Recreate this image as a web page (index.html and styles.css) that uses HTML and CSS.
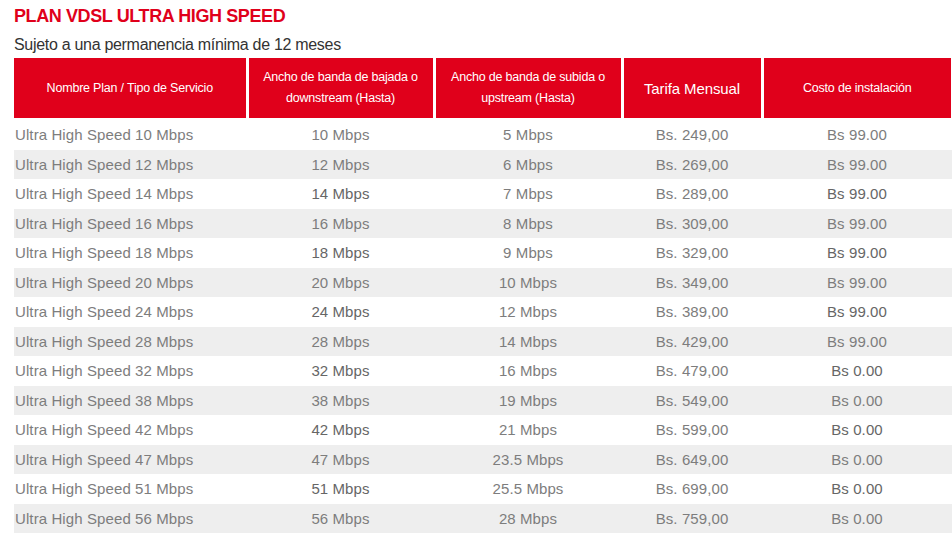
FILE: index.html
```html
<!DOCTYPE html>
<html lang="es">
<head>
<meta charset="utf-8">
<title>Plan VDSL Ultra High Speed</title>
<link rel="stylesheet" href="styles.css">
</head>
<body>
<div class="page">
  <h1 class="title">PLAN VDSL ULTRA HIGH SPEED</h1>
  <p class="subtitle">Sujeto a una permanencia mínima de 12 meses</p>
  <table class="plans">
    <colgroup>
      <col class="c1"><col class="c2"><col class="c3"><col class="c4"><col class="c5">
    </colgroup>
    <thead>
      <tr>
        <th>Nombre Plan / Tipo de Servicio</th>
        <th>Ancho de banda de bajada o downstream (Hasta)</th>
        <th>Ancho de banda de subida o upstream (Hasta)</th>
        <th class="big">Tarifa Mensual</th>
        <th class="last">Costo de instalación</th>
      </tr>
    </thead>
    <tbody>
      <tr><td class="name">Ultra High Speed 10 Mbps</td><td>10 Mbps</td><td>5 Mbps</td><td>Bs. 249,00</td><td>Bs 99.00</td></tr>
      <tr><td class="name">Ultra High Speed 12 Mbps</td><td>12 Mbps</td><td>6 Mbps</td><td>Bs. 269,00</td><td>Bs 99.00</td></tr>
      <tr><td class="name">Ultra High Speed 14 Mbps</td><td class="dk">14 Mbps</td><td>7 Mbps</td><td>Bs. 289,00</td><td class="dk">Bs 99.00</td></tr>
      <tr><td class="name">Ultra High Speed 16 Mbps</td><td>16 Mbps</td><td>8 Mbps</td><td>Bs. 309,00</td><td>Bs 99.00</td></tr>
      <tr><td class="name">Ultra High Speed 18 Mbps</td><td class="dk">18 Mbps</td><td>9 Mbps</td><td>Bs. 329,00</td><td class="dk">Bs 99.00</td></tr>
      <tr><td class="name">Ultra High Speed 20 Mbps</td><td>20 Mbps</td><td>10 Mbps</td><td>Bs. 349,00</td><td>Bs 99.00</td></tr>
      <tr><td class="name">Ultra High Speed 24 Mbps</td><td class="dk">24 Mbps</td><td>12 Mbps</td><td>Bs. 389,00</td><td class="dk">Bs 99.00</td></tr>
      <tr><td class="name">Ultra High Speed 28 Mbps</td><td>28 Mbps</td><td>14 Mbps</td><td>Bs. 429,00</td><td>Bs 99.00</td></tr>
      <tr><td class="name">Ultra High Speed 32 Mbps</td><td class="dk">32 Mbps</td><td>16 Mbps</td><td>Bs. 479,00</td><td class="dk">Bs 0.00</td></tr>
      <tr><td class="name">Ultra High Speed 38 Mbps</td><td>38 Mbps</td><td>19 Mbps</td><td>Bs. 549,00</td><td>Bs 0.00</td></tr>
      <tr><td class="name">Ultra High Speed 42 Mbps</td><td class="dk">42 Mbps</td><td>21 Mbps</td><td>Bs. 599,00</td><td class="dk">Bs 0.00</td></tr>
      <tr><td class="name">Ultra High Speed 47 Mbps</td><td>47 Mbps</td><td>23.5 Mbps</td><td>Bs. 649,00</td><td>Bs 0.00</td></tr>
      <tr><td class="name">Ultra High Speed 51 Mbps</td><td class="dk">51 Mbps</td><td>25.5 Mbps</td><td>Bs. 699,00</td><td class="dk">Bs 0.00</td></tr>
      <tr><td class="name">Ultra High Speed 56 Mbps</td><td>56 Mbps</td><td>28 Mbps</td><td>Bs. 759,00</td><td>Bs 0.00</td></tr>
    </tbody>
  </table>
</div>
</body>
</html>
```

FILE: styles.css
```css
html, body {
  margin: 0;
  padding: 0;
  background: #fff;
}

.page {
  padding: 6px 0 0 14px;
  font-family: "Liberation Sans", Arial, sans-serif;
}

.title {
  margin: 0;
  font-size: 18px;
  line-height: 21px;
  font-weight: bold;
  color: #e0001b;
  letter-spacing: -0.4px;
}

.subtitle {
  margin: 8px 0 0;
  font-size: 16px;
  line-height: 19px;
  color: #333;
  letter-spacing: -0.3px;
}

.plans {
  margin-top: 4px;
  border-collapse: collapse;
  border-spacing: 0;
  table-layout: fixed;
  width: 938px;
}

.c1 { width: 233px; }
.c2 { width: 187px; }
.c3 { width: 188px; }
.c4 { width: 140px; }
.c5 { width: 190px; }

.plans th {
  background: #e0001b;
  color: #fff;
  font-weight: normal;
  font-size: 12.5px;
  line-height: 21px;
  height: 60px;
  padding: 0 6px;
  text-align: center;
  vertical-align: middle;
  border-right: 3px solid #fff;
  letter-spacing: -0.2px;
}

.plans th.last {
  border-right: 2px solid #fff;
}

.plans th.big {
  font-size: 15px;
  letter-spacing: -0.1px;
}

.plans td {
  height: 29.5px;
  padding: 0;
  font-size: 15px;
  color: #7d7d7d;
  text-align: center;
  vertical-align: middle;
  letter-spacing: 0.1px;
}

.plans td.name {
  text-align: left;
  padding-left: 1px;
}

.plans td.dk {
  color: #666;
}

.plans tbody tr:nth-child(even) td {
  background: #eeeeee;
}

.plans tbody tr:first-child td {
  padding-top: 2px;
}
```
